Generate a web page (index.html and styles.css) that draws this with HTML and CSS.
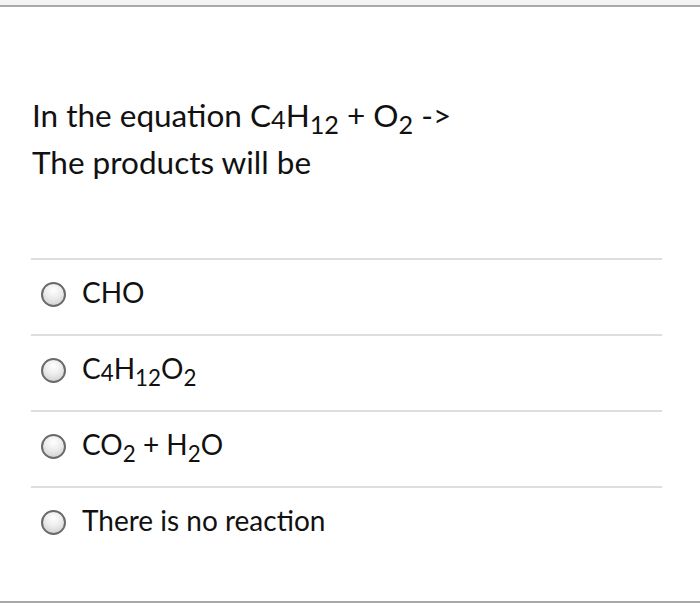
FILE: index.html
```html
<!DOCTYPE html>
<html lang="en">
<head>
<meta charset="utf-8">
<title>Question</title>
<link rel="stylesheet" href="styles.css">
</head>
<body>
<div class="page">
  <div class="topbar"></div>
  <div class="card">
    <div class="question">
      <p>In the equation C<sub class="hi">4</sub>H<sub>12</sub> + O<sub>2</sub> -&gt;</p>
      <p>The products will be</p>
    </div>
    <ul class="answers">
      <li class="answer"><span class="radio"></span><span class="label">CHO</span></li>
      <li class="answer"><span class="radio"></span><span class="label">C<sub class="hi">4</sub>H<sub>12</sub>O<sub>2</sub></span></li>
      <li class="answer"><span class="radio"></span><span class="label">CO<sub>2</sub> + H<sub>2</sub>O</span></li>
      <li class="answer"><span class="radio"></span><span class="label">There is no reaction</span></li>
    </ul>
  </div>
  <div class="bottombar"></div>
</div>
</body>
</html>
```

FILE: styles.css
```css
html, body {
  margin: 0;
  padding: 0;
  background: #ffffff;
}

body {
  font-family: Lato, "Open Sans", sans-serif;
  color: #111111;
}

.page {
  height: 615px;
  display: flex;
  flex-direction: column;
}

.topbar {
  height: 5px;
  background: #f3f3f3;
  border-bottom: 2px solid #a9a9a9;
}

.card {
  height: 594px;
  display: flex;
  flex-direction: column;
}

.question {
  padding: 85px 0 0 32px;
  font-size: 31.5px;
  line-height: 47px;
  height: 94px;
}

.question p {
  margin: 0;
}

sub {
  font-size: 0.8em;
  line-height: 0;
  vertical-align: -7px;
}

sub.hi {
  vertical-align: -2px;
}

.answers {
  list-style: none;
  margin: 72px 38px 0 31px;
  padding: 0;
}

.answer {
  display: flex;
  gap: 16px;
  height: 74px;
  border-top: 2px solid #dedede;
  padding: 0 0 0 10px;
  align-items: flex-start;
}

.radio {
  width: 21px;
  height: 21px;
  margin-top: 22px;
  border: 2px solid #6a6a6a;
  border-radius: 50%;
  background: radial-gradient(circle at 50% 30%, #ffffff 0%, #ececec 45%, #c8c8c8 100%);
  flex: none;
}

.label {
  font-size: 28px;
  line-height: 36px;
  margin-top: 14px;
}

.bottombar {
  height: 2px;
  background: #a9a9a9;
}
```
